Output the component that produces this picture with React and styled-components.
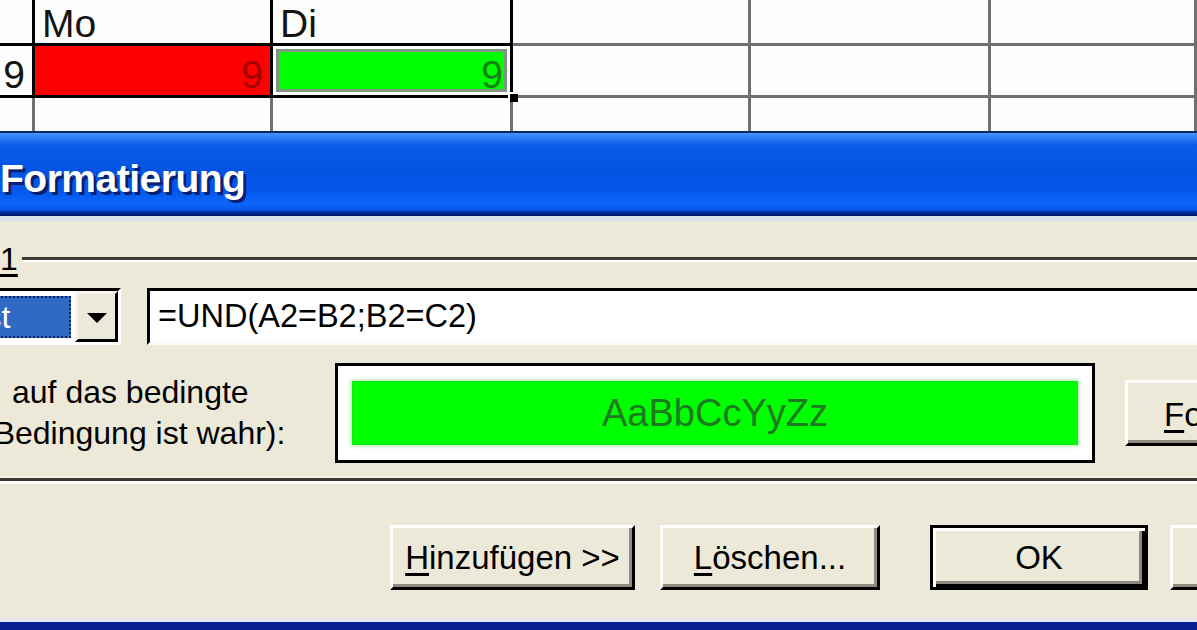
import React from 'react';
import styled, { createGlobalStyle, css } from 'styled-components';

const GlobalStyle = createGlobalStyle`
  *, *::before, *::after { box-sizing: border-box; }
  html, body { margin: 0; padding: 0; background: #fff; overflow: hidden; }
  #root { width: 1197px; height: 630px; overflow: hidden; }
`;

const Screen = styled.div`
  width: 1197px;
  height: 630px;
  overflow: hidden;
  display: flex;
  flex-direction: column;
  font-family: "Liberation Sans", Arial, sans-serif;
`;

/* spreadsheet behind the dialog */
const Sheet = styled.div`
  display: grid;
  grid-template-columns: 35px 238px 240px 238px 240px 1fr;
  grid-template-rows: 46px 52px 33px;
  background: #fdfdfd;
  font-size: 39px;
  line-height: 38px;
`;

const Cell = styled.div`
  position: relative;
  display: flex;
  justify-content: ${({ $right }) => ($right ? 'flex-end' : 'flex-start')};
  padding: ${({ $padTop }) => $padTop ?? 5}px 7px 0;
  background: ${({ $fill }) => $fill || 'transparent'};
  color: ${({ $ink }) => $ink || '#141414'};
  border-right: 3px solid ${({ $line }) => $line || '#707070'};
  border-bottom: ${({ $open, $line }) => ($open ? '0' : `3px solid ${$line || '#707070'}`)};
`;

const SelectedCell = styled(Cell)`
  z-index: 1;
  box-shadow: 0 -1px 0 #000, inset 0 0 0 3px #fff, inset 0 0 0 6px #7f957f;
`;

const FillHandle = styled.span`
  position: absolute;
  right: -8px;
  bottom: -7px;
  width: 10px;
  height: 10px;
  background: #000;
  border-top: 2px solid #fff;
  border-left: 2px solid #fff;
`;

/* dialog */
const Dialog = styled.div`
  flex: 1;
  display: flex;
  flex-direction: column;
  background: #ece9d8;
  color: #000;
`;

const TitleBar = styled.div`
  height: 90px;
  padding-top: 28px;
  border-bottom: 5px solid #dce2ec;
  background: linear-gradient(
    to bottom,
    #0a246a 0,
    #0a246a 2px,
    #4a96f8 2px,
    #2f80f5 6px,
    #0a5ce8 14px,
    #0354e2 40px,
    #0457ea 60px,
    #0c66fb 72px,
    #0858ee 79px,
    #002d9c 81px,
    #00186e 85px
  );
`;

const TitleText = styled.span`
  display: block;
  font-size: 39px;
  line-height: 40px;
  font-weight: bold;
  letter-spacing: -0.5px;
  color: #fff;
  text-shadow: 3px 3px 0 #0b2170;
`;

const Body = styled.div`
  flex: 1;
  display: flex;
  flex-direction: column;
  font-size: 32px;

  u {
    text-decoration-thickness: 3px;
    text-underline-offset: 4px;
  }
`;

const GroupHeader = styled.div`
  display: flex;
  align-items: center;
  gap: 4px;
  height: 32px;
  margin-top: 22px;
`;

const GroupLabel = styled.span`
  line-height: 32px;
`;

const Etched = styled.div`
  flex: 1;
  border-top: 3px solid #3d3b31;
  border-bottom: 2px solid #fff;
`;

const ConditionRow = styled.div`
  display: flex;
  height: 57px;
  margin-top: 13px;
`;

const Combo = styled.div`
  flex: none;
  display: flex;
  width: 255px;
  margin-left: -134px;
  background: #fff;
  border-top: 3px solid #000;
  border-left: 3px solid #000;
  border-right: 3px solid #fff;
  border-bottom: 3px solid #fff;
`;

const Selection = styled.div`
  flex: 1;
  display: flex;
  align-items: center;
  margin: 5px 4px 4px 3px;
  background: #316ac5;
  border: 2px dotted #0d1f63;
  color: #fff;
  white-space: nowrap;
  text-indent: -4px;
`;

const DropButton = styled.div`
  width: 43px;
  display: flex;
  align-items: center;
  justify-content: center;
  background: #ece9d8;
  border-top: 3px solid #f6f4ec;
  border-left: 3px solid #f6f4ec;
  border-right: 3px solid #000;
  border-bottom: 3px solid #000;

  &::after {
    content: '';
    margin-top: 2px;
    border-left: 10px solid transparent;
    border-right: 10px solid transparent;
    border-top: 10px solid #000;
  }
`;

const FormulaBox = styled.div`
  flex: 1;
  display: flex;
  align-items: center;
  margin-left: 26px;
  margin-right: -40px;
  padding-left: 8px;
  font-size: 32.5px;
  background: #fff;
  border-top: 3px solid #000;
  border-left: 3px solid #000;
  border-bottom: 3px solid #fbfbf8;
  white-space: nowrap;
`;

const PreviewRow = styled.div`
  display: flex;
  align-items: center;
  height: 100px;
  margin-top: 18px;
`;

const PreviewLabel = styled.div`
  flex: none;
  width: 335px;
  line-height: 41px;
  white-space: nowrap;
`;

const LabelLine = styled.div`
  margin-left: ${({ $shift }) => $shift}px;
`;

const PreviewFrame = styled.div`
  flex: none;
  width: 760px;
  height: 100px;
  padding: 15px 14px;
  background: #fff;
  border: 3px solid #000;
`;

const PreviewSwatch = styled.div`
  height: 100%;
  display: flex;
  align-items: center;
  justify-content: center;
  background: #00ff00;
  box-shadow: 0 0 4px 1px #a6eca6, inset 0 0 2px #2fc12f;
  color: #1d7a20;
  font-size: 38px;
`;

const Separator = styled.div`
  margin-top: 15px;
  border-top: 3px solid #3b392e;
  border-bottom: 3px solid #fff;
  box-shadow: 0 -2px 0 #f7f5ee;
`;

const ButtonRow = styled.div`
  display: flex;
  margin-top: 41px;
  padding-left: 390px;
`;

const Button = styled.div`
  flex: none;
  display: flex;
  align-items: center;
  justify-content: center;
  width: ${({ $w }) => $w}px;
  height: ${({ $h }) => $h || 65}px;
  margin-left: ${({ $before }) => $before || 0}px;
  font-size: 33px;
  white-space: nowrap;
  background: #ece9d8;
  border: 3px solid;
  border-color: #fff #000 #000 #fff;
  box-shadow: inset -3px -3px 0 #8e8c82;

  ${({ $default }) =>
    $default &&
    css`
      border-color: #000;
      box-shadow: inset 3px 3px 0 #fff, inset -3px -3px 0 #000, inset -6px -6px 0 #8e8c82;
    `}
`;

const FormatButton = styled(Button)`
  padding-top: 4px;
`;

const BottomFrame = styled.div`
  height: 11px;
  border-top: 3px solid #dfe6f4;
  background: #0a1f92;
`;

const Spacer = styled.div`
  flex: 1;
`;

const BLACK = '#000';

export default function App() {
  return (
    <>
      <GlobalStyle />
      <Screen>
        <Sheet>
          <Cell $line={BLACK} />
          <Cell $line={BLACK}>Mo</Cell>
          <Cell $line={BLACK}>Di</Cell>
          <Cell />
          <Cell />
          <Cell />

          <Cell $line={BLACK} $padTop={10} $right>9</Cell>
          <Cell $line={BLACK} $padTop={10} $right $fill="#ff0000" $ink="#a30000">9</Cell>
          <SelectedCell $line={BLACK} $padTop={10} $right $fill="#00ff00" $ink="#128212">
            9
            <FillHandle />
          </SelectedCell>
          <Cell $padTop={10} />
          <Cell $padTop={10} />
          <Cell $padTop={10} />

          <Cell $open />
          <Cell $open />
          <Cell $open />
          <Cell $open />
          <Cell $open />
          <Cell $open />
        </Sheet>

        <Dialog>
          <TitleBar>
            <TitleText>Formatierung</TitleText>
          </TitleBar>

          <Body>
            <GroupHeader>
              <GroupLabel><u>1</u></GroupLabel>
              <Etched />
            </GroupHeader>

            <ConditionRow>
              <Combo>
                <Selection>Formel ist</Selection>
                <DropButton />
              </Combo>
              <FormulaBox>=UND(A2=B2;B2=C2)</FormulaBox>
            </ConditionRow>

            <PreviewRow>
              <PreviewLabel>
                <LabelLine $shift={12}>auf das bedingte</LabelLine>
                <LabelLine $shift={-17}>(Bedingung ist wahr):</LabelLine>
              </PreviewLabel>
              <PreviewFrame>
                <PreviewSwatch>AaBbCcYyZz</PreviewSwatch>
              </PreviewFrame>
              <FormatButton $w={210} $h={66} $before={30}>
                <span><u>F</u>ormat...</span>
              </FormatButton>
            </PreviewRow>

            <Separator />

            <ButtonRow>
              <Button $w={245}><span><u>H</u>inzufügen &gt;&gt;</span></Button>
              <Button $w={220} $before={25}><span><u>L</u>öschen...</span></Button>
              <Button $w={218} $before={50} $default>OK</Button>
              <Button $w={220} $before={22}>Abbrechen</Button>
            </ButtonRow>

            <Spacer />
          </Body>

          <BottomFrame />
        </Dialog>
      </Screen>
    </>
  );
}
